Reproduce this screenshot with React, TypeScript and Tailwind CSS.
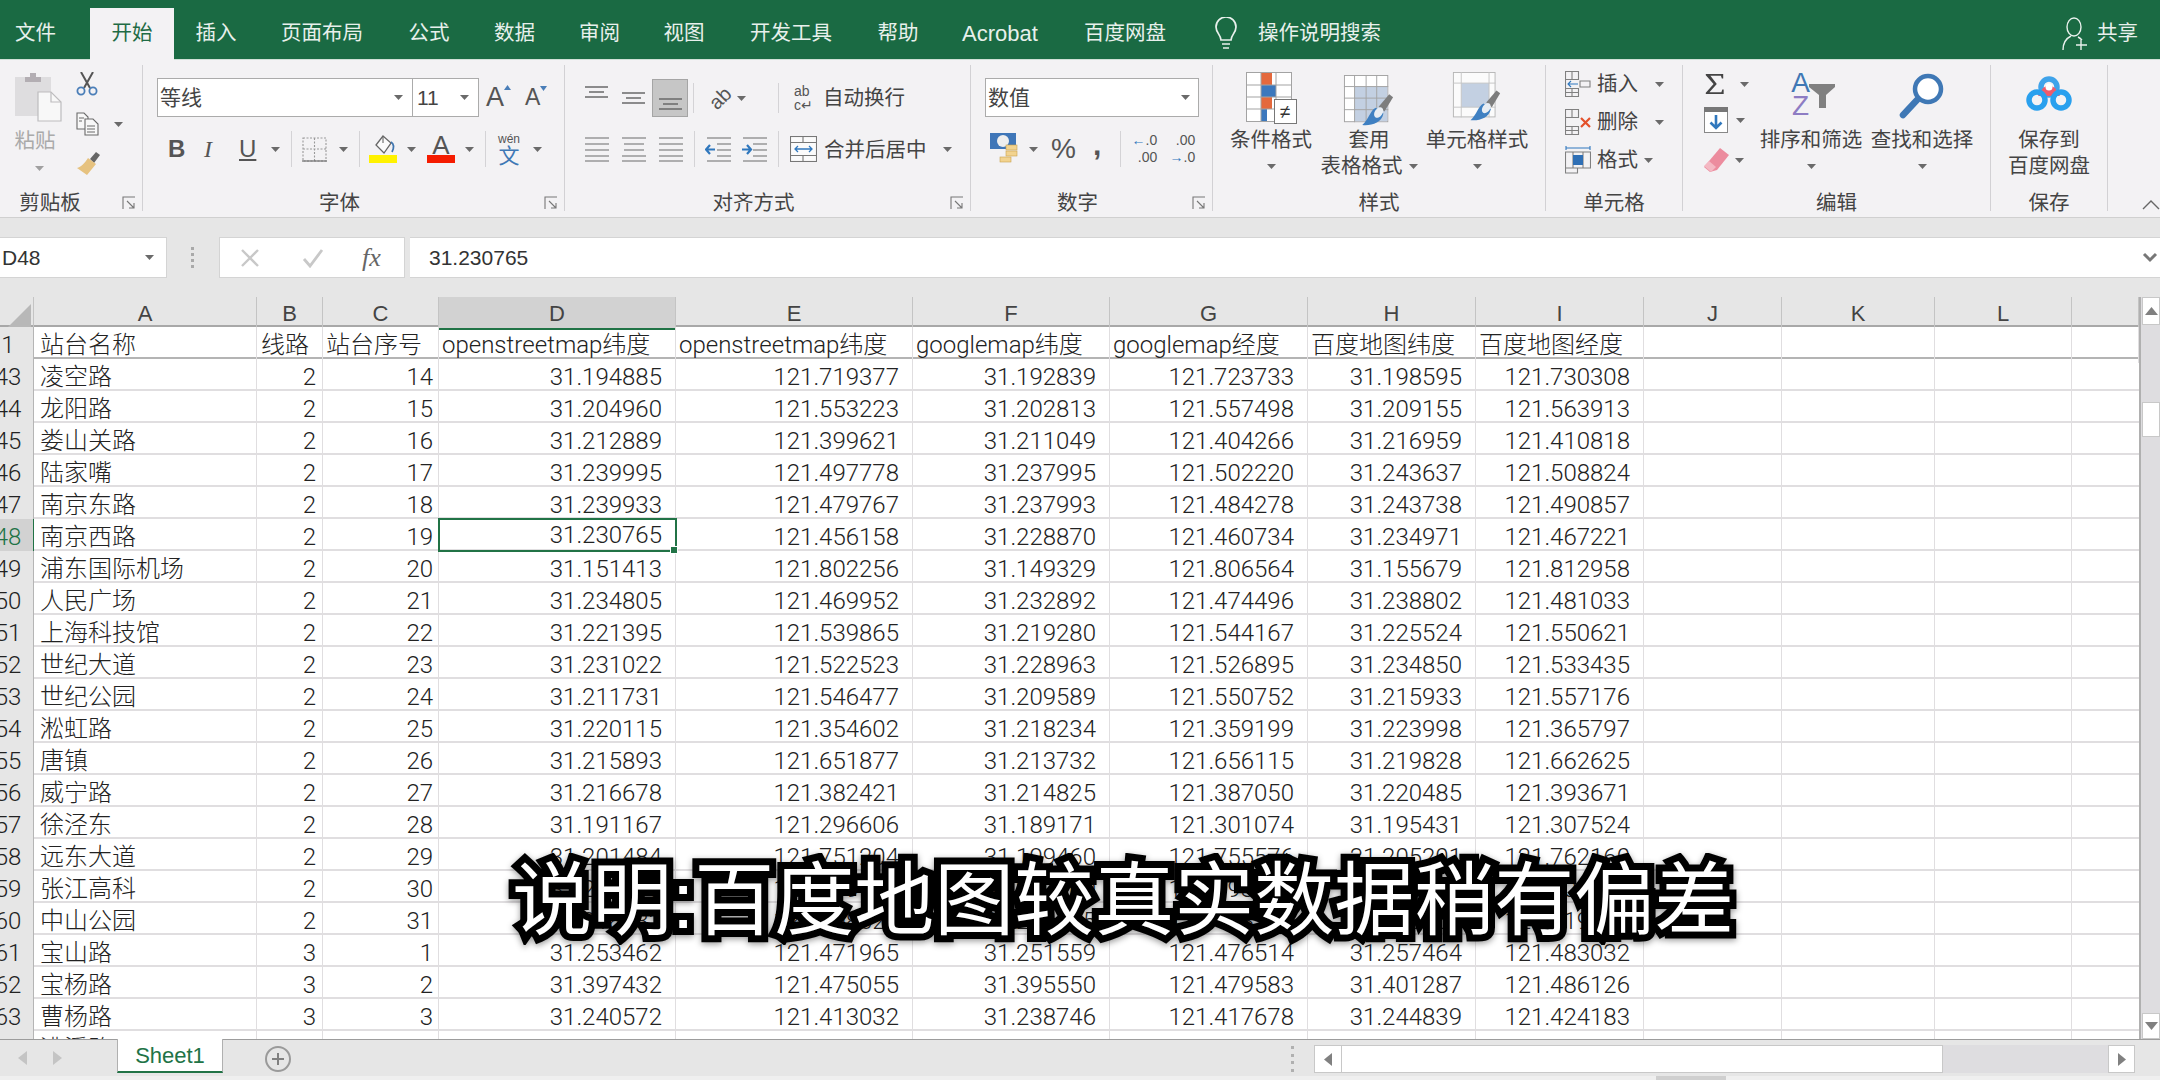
import React from 'react';

const tabs = [
  { t: '文件', c: 'w-[90px] pl-[15px] justify-start' },
  { t: '开始', c: 'w-[84px] justify-center bg-[#f3f2f4] !text-[#1f6b45]' },
  { t: '插入', c: 'w-[84px] justify-center' },
  { t: '页面布局', c: 'w-[128px] justify-center' },
  { t: '公式', c: 'w-[86px] justify-center' },
  { t: '数据', c: 'w-[85px] justify-center' },
  { t: '审阅', c: 'w-[85px] justify-center' },
  { t: '视图', c: 'w-[84px] justify-center' },
  { t: '开发工具', c: 'w-[130px] justify-center' },
  { t: '帮助', c: 'w-[84px] justify-center' },
  { t: 'Acrobat', c: 'w-[120px] justify-center text-[22px]' },
  { t: '百度网盘', c: 'w-[130px] justify-center' },
];

const rows: string[][] = [
  ['43', '凌空路', '2', '14', '31.194885', '121.719377', '31.192839', '121.723733', '31.198595', '121.730308'],
  ['44', '龙阳路', '2', '15', '31.204960', '121.553223', '31.202813', '121.557498', '31.209155', '121.563913'],
  ['45', '娄山关路', '2', '16', '31.212889', '121.399621', '31.211049', '121.404266', '31.216959', '121.410818'],
  ['46', '陆家嘴', '2', '17', '31.239995', '121.497778', '31.237995', '121.502220', '31.243637', '121.508824'],
  ['47', '南京东路', '2', '18', '31.239933', '121.479767', '31.237993', '121.484278', '31.243738', '121.490857'],
  ['48', '南京西路', '2', '19', '31.230765', '121.456158', '31.228870', '121.460734', '31.234971', '121.467221'],
  ['49', '浦东国际机场', '2', '20', '31.151413', '121.802256', '31.149329', '121.806564', '31.155679', '121.812958'],
  ['50', '人民广场', '2', '21', '31.234805', '121.469952', '31.232892', '121.474496', '31.238802', '121.481033'],
  ['51', '上海科技馆', '2', '22', '31.221395', '121.539865', '31.219280', '121.544167', '31.225524', '121.550621'],
  ['52', '世纪大道', '2', '23', '31.231022', '121.522523', '31.228963', '121.526895', '31.234850', '121.533435'],
  ['53', '世纪公园', '2', '24', '31.211731', '121.546477', '31.209589', '121.550752', '31.215933', '121.557176'],
  ['54', '淞虹路', '2', '25', '31.220115', '121.354602', '31.218234', '121.359199', '31.223998', '121.365797'],
  ['55', '唐镇', '2', '26', '31.215893', '121.651877', '31.213732', '121.656115', '31.219828', '121.662625'],
  ['56', '威宁路', '2', '27', '31.216678', '121.382421', '31.214825', '121.387050', '31.220485', '121.393671'],
  ['57', '徐泾东', '2', '28', '31.191167', '121.296606', '31.189171', '121.301074', '31.195431', '121.307524'],
  ['58', '远东大道', '2', '29', '31.201484', '121.751204', '31.199460', '121.755576', '31.205201', '121.762160'],
  ['59', '张江高科', '2', '30', '31.202793', '121.589470', '31.200760', '121.593815', '31.206602', '121.600373'],
  ['60', '中山公园', '2', '31', '31.218632', '121.408620', '31.216765', '121.413245', '31.222551', '121.419873'],
  ['61', '宝山路', '3', '1', '31.253462', '121.471965', '31.251559', '121.476514', '31.257464', '121.483032'],
  ['62', '宝杨路', '3', '2', '31.397432', '121.475055', '31.395550', '121.479583', '31.401287', '121.486126'],
  ['63', '曹杨路', '3', '3', '31.240572', '121.413032', '31.238746', '121.417678', '31.244839', '121.424183'],
  ['64', '漕溪路', '3', '4', '', '', '', '', '', ''],
];

const gridCols = 'grid grid-cols-[34px_223px_66px_116px_237px_237px_197px_198px_168px_168px_138px_153px_137px_67px]';
const cellText = "text-[#222] text-[24px] font-light [font-kerning:none] font-['Roboto','Noto_Sans_CJK_SC',sans-serif]";
const letters = ['A', 'B', 'C', 'D', 'E', 'F', 'G', 'H', 'I', 'J', 'K', 'L', ''];
const head = ['站台名称', '线路', '站台序号', 'openstreetmap纬度', 'openstreetmap纬度', 'googlemap纬度', 'googlemap经度', '百度地图纬度', '百度地图经度'];

const Caret = ({ className = '' }: { className?: string }) => (
  <svg width="9" height="5" viewBox="0 0 9 5" className={`shrink-0 ${className}`}><path d="M0 0h9L4.5 5z" fill="#6a6a6a" /></svg>
);

const Launcher = () => (
  <svg width="14" height="14" viewBox="0 0 14 14" fill="none" stroke="#777" strokeWidth="1.1">
    <path d="M1 13V1h12" /><path d="M5 5l7 7M7 12h5V7" />
  </svg>
);

const VBar = ({ className = '' }: { className?: string }) => <div className={`w-px h-[36px] bg-[#d4d3d6] shrink-0 ${className}`} />;

const Group = ({ className, label, launcher, pr, children }: { className: string; label: string; launcher?: boolean; pr?: string; children: React.ReactNode }) => (
  <div className={`h-[146px] border-r border-[#d2d1d4] flex flex-col shrink-0 ${className}`}>
    <div className="h-[130px] text-[#444] text-[20.5px]">{children}</div>
    <div className="h-[16px] flex items-center text-[#444] text-[20.5px]">
      <div className={`flex-1 text-center ${pr || ''}`}>{label}</div>
      {launcher && <div className="w-[28px] flex justify-center pl-[2px]"><Launcher /></div>}
    </div>
  </div>
);

const PasteIcon = () => (
  <svg width="48" height="50" viewBox="0 0 48 50">
    <rect x="0" y="5" width="36" height="39" fill="#dedddf" />
    <path d="M10 5h5V1h6v4h5v5H10z" fill="#b3aeb3" />
    <path d="M23 20h13l10 10v19H23z" fill="#f8f8f8" stroke="#bdbcbe" strokeWidth="1.2" />
    <path d="M36 20v10h10" fill="none" stroke="#bdbcbe" strokeWidth="1.2" />
  </svg>
);

const ScissorsIcon = () => (
  <svg width="22" height="24" viewBox="0 0 22 24" fill="none">
    <path d="M5 0l9 16M17 0L8 16" stroke="#555" strokeWidth="2" />
    <circle cx="5" cy="19" r="3.6" stroke="#4a7eb8" strokeWidth="1.8" />
    <circle cx="17" cy="19" r="3.6" stroke="#4a7eb8" strokeWidth="1.8" />
  </svg>
);

const CopyIcon = () => (
  <svg width="24" height="24" viewBox="0 0 24 24" fill="#f8f8f8" stroke="#6a6a6a" strokeWidth="1.1">
    <path d="M1 1h7l4 4v12H1z" />
    <path d="M9 7h8l5 5v11H9z" />
    <path d="M3 6h5M3 9h3M11 14h8M11 17h8M11 20h8" fill="none" />
  </svg>
);

const BrushIcon = () => (
  <svg width="25" height="23" viewBox="0 0 25 23">
    <path d="M14 7l6-7 4 3-6 8z" fill="#666" />
    <path d="M12 6l8 6-9 11-10-7c4-1 8-5 11-10z" fill="#e6c27f" />
  </svg>
);

const BorderIcon = () => (
  <svg width="25" height="25" viewBox="0 0 25 25" fill="none" stroke="#999" strokeWidth="1.1" strokeDasharray="2 1.5">
    <path d="M1 1h23v23H1zM12.5 1v23M1 12h23" />
    <path d="M0 24h25" stroke="#666" strokeDasharray="none" />
  </svg>
);

const FillIcon = () => (
  <svg width="29" height="28" viewBox="0 0 29 28">
    <path d="M14 1l8 7-7 10-8-8z" fill="#fbfbfb" stroke="#666" strokeWidth="1.3" />
    <path d="M14 1v7" stroke="#666" strokeWidth="1.1" />
    <path d="M22 7c3 2 3 6 1 10" fill="none" stroke="#3f76b0" strokeWidth="1.7" />
    <rect x="0" y="20" width="28" height="8" fill="#fff200" />
  </svg>
);

const AlignIcon = ({ variant }: { variant: 'l' | 'c' | 'r' }) => (
  <svg width="24" height="25" viewBox="0 0 24 25" stroke="#6a6a6a" strokeWidth="1.2">
    <path d="M0 1h24M0 19h24M0 24h24" />
    {variant === 'c' ? <path d="M2 7h20M2 13h20" /> : <path d="M0 7h24M0 13h24" />}
  </svg>
);

const VAlign = ({ className = '' }: { className?: string }) => (
  <svg width="23" height="12" viewBox="0 0 23 12" stroke="#6a6a6a" strokeWidth="1.3" className={className}>
    <path d="M0 1h23M4 6h15M0 11h23" />
  </svg>
);

const IndentIcon = ({ out }: { out?: boolean }) => (
  <svg width="26" height="25" viewBox="0 0 26 25" fill="none">
    <path d="M2 1h24M12 7h14M12 13h14M12 19h14M2 24h24" stroke="#6a6a6a" strokeWidth="1.2" />
    {out ? <path d="M10 12.500H1M5 8l-4 4.500L5 17" stroke="#2f77bd" strokeWidth="2.2" /> : <path d="M1 12.500h9M6 8l4 4.500L6 17" stroke="#2f77bd" strokeWidth="2.2" />}
  </svg>
);

const MergeIcon = () => (
  <svg width="27" height="26" viewBox="0 0 27 26" fill="#fbfbfb" stroke="#777" strokeWidth="1.1">
    <rect x="0.5" y="0.5" width="26" height="25" />
    <path d="M0 6.500h27M0 19.500h27M13 0v6.500M13 19.500V26" fill="none" />
    <path d="M5 13h17M8 10l-3 3 3 3M19 10l3 3-3 3" fill="none" stroke="#2f77bd" strokeWidth="1.3" />
  </svg>
);

const CurrencyIcon = () => (
  <svg width="28" height="33" viewBox="0 0 28 33">
    <rect x="0" y="0" width="26" height="16" fill="#3f76b8" />
    <ellipse cx="13" cy="8" rx="6" ry="6" fill="#eee" />
    <rect x="16" y="12" width="11" height="5" fill="#f2d38f" stroke="#c9a24f" strokeWidth=".6" />
    <rect x="16" y="18" width="11" height="5" fill="#f2d38f" stroke="#c9a24f" strokeWidth=".6" />
    <rect x="10" y="24" width="11" height="5" fill="#f2d38f" stroke="#c9a24f" strokeWidth=".6" />
  </svg>
);

const CondIcon = () => (
  <div className="relative w-[51px] h-[52px]">
    <svg width="46" height="50" viewBox="0 0 46 50" fill="none">
      <rect x="0.5" y="0.5" width="45" height="49" fill="#fff" stroke="#a3a3a3" />
      <rect x="15" y="1" width="11" height="12" fill="#e4693d" />
      <rect x="15" y="13" width="15" height="12" fill="#3c78bd" />
      <rect x="15" y="25" width="11" height="12" fill="#e4693d" />
      <rect x="15" y="37" width="6" height="12" fill="#3c78bd" />
      <path d="M0 13h46M0 25h46M0 37h46M15 0v50M30 0v50" stroke="#a3a3a3" strokeWidth="1" />
    </svg>
    <div className="absolute right-0 bottom-0 w-[23px] h-[25px] bg-white border border-[#777] flex items-center justify-center text-[19px] leading-none text-[#333]">≠</div>
  </div>
);

const TableIcon = () => (
  <svg width="52" height="52" viewBox="0 0 52 54" fill="none" className="mt-[3px]">
    <rect x="0.5" y="0.5" width="45" height="48" fill="#fff" stroke="#a3a3a3" />
    <path d="M11 12h34v36H11z" fill="#c3d0e2" />
    <path d="M0 12h46M0 24h46M0 36h46M11 0v49M23 0v49M34 0v49" stroke="#a3a3a3" />
    <path d="M36 33l11-13 4 3-9 15z" fill="#7d7d7d" />
    <path d="M33 34c-6 3-7 12-14 18 9 1 20-2 22-12z" fill="#3f80c2" />
    <ellipse cx="36" cy="39" rx="4" ry="6" fill="#e8edf3" transform="rotate(35 36 39)" />
  </svg>
);

const StyleIcon = () => (
  <svg width="52" height="50" viewBox="0 0 52 54" fill="none">
    <rect x="0.5" y="0.5" width="45" height="48" fill="#fbfbfb" stroke="#b5b5b5" />
    <rect x="9" y="12" width="30" height="26" fill="#c3d0e2" />
    <path d="M0 12h46M9 0v49M39 0v49M0 38h46" stroke="#c4c4c4" />
    <path d="M36 33l11-13 4 3-9 15z" fill="#7d7d7d" />
    <path d="M33 34c-6 3-7 12-14 18 9 1 20-2 22-12z" fill="#3f80c2" />
    <ellipse cx="36" cy="39" rx="4" ry="6" fill="#e8edf3" transform="rotate(35 36 39)" />
  </svg>
);

const CellsGrid = ({ children }: { children?: React.ReactNode }) => (
  <svg width="26" height="26" viewBox="0 0 26 26" fill="none" stroke="#808080" strokeWidth="1.1" className="shrink-0">
    <path d="M.5.5h13v8H.5zM7 .5v8M.5 17.5h13v8H.5zM7 17.5v8M.5 8.5v9M13.5 21.5H.5" />
    {children}
  </svg>
);

const SigmaIcon = () => (
  <svg width="21" height="22" viewBox="0 0 21 24"><path d="M1 1h19v5h-1.500l-1-3H6l7 9-8 9h13l1-3H20.500v5H1v-1.500L9.500 12 1 2.500z" fill="#444" /></svg>
);

const FillDownIcon = () => (
  <svg width="24" height="26" viewBox="0 0 24 26">
    <rect x="0.5" y="0.5" width="23" height="25" fill="#fff" stroke="#888" />
    <rect x="0" y="0" width="24" height="5" fill="#777" />
    <path d="M12 8v13M6.500 15.500l5.500 5.500 5.500-5.500" fill="none" stroke="#2f77bd" strokeWidth="2.6" />
  </svg>
);

const EraserIcon = () => (
  <svg width="25" height="24" viewBox="0 0 25 24"><path d="M16 0l9 7-12 15-7 2-6-5z" fill="#ec8c9e" /><path d="M0 18l7 6 5-5-7-6z" fill="#f4b8c3" /></svg>
);

const FunnelIcon = () => (
  <svg width="26" height="25" viewBox="0 0 26 25"><path d="M0 1h26v3l-9 8v13h-7V12L0 4z" fill="#808080" /></svg>
);

const FindIcon = () => (
  <svg width="46" height="46" viewBox="0 0 46 46" fill="none">
    <circle cx="29" cy="16" r="13" stroke="#3f78b5" strokeWidth="4.500" fill="#fff" />
    <path d="M18 27L4 42" stroke="#3f78b5" strokeWidth="6.500" strokeLinecap="round" />
  </svg>
);

const BaiduIcon = () => (
  <svg width="46" height="36" viewBox="0 0 46 36" fill="none">
    <circle cx="23" cy="11" r="8" stroke="#3fa3ea" strokeWidth="5.500" />
    <path d="M17 12a10 10 0 0 1 12 0l5 8H12z" fill="#ef5b6b" />
    <circle cx="11" cy="24" r="8" stroke="#29a0ee" strokeWidth="5.500" />
    <circle cx="35" cy="24" r="8" stroke="#29a0ee" strokeWidth="5.500" />
    <circle cx="23" cy="11" r="3.500" fill="#fff" />
  </svg>
);

const BulbIcon = () => (
  <svg width="22" height="34" viewBox="0 0 22 34" fill="none" stroke="#e8f0ec" strokeWidth="1.7">
    <path d="M6 23c0-5-5-7-5-13a10 10 0 0 1 20 0c0 6-5 8-5 13z" />
    <path d="M7 27h8M8 31h6" />
  </svg>
);

const UserIcon = () => (
  <svg width="26" height="34" viewBox="0 0 26 34" fill="none" stroke="#e8f0ec" strokeWidth="1.4">
    <ellipse cx="12" cy="10" rx="7" ry="9" />
    <path d="M1 33c0-8 4-12 8-14M16 20c2 1 3 2 4 3M19 23v10M14 28h11" />
  </svg>
);

const LargeBtn = ({ className, icon, lines, caretInline }: { className: string; icon: React.ReactNode; lines: string[]; caretInline?: boolean }) => (
  <div className={`flex flex-col items-center shrink-0 ${className}`}>
    <div className="h-[62px] pt-[7px]">{icon}</div>
    {lines.map((l, i) => (
      <div key={i} className="h-[26px] leading-[26px] whitespace-nowrap flex items-center">
        {l}
        {caretInline && i === lines.length - 1 && <Caret className="ml-[6px]" />}
      </div>
    ))}
    {!caretInline && lines.length === 1 && <div className="h-[26px] flex items-center"><Caret /></div>}
  </div>
);

const Ribbon = () => (
  <div className="h-[158px] bg-[#f3f2f4] pt-[5px] flex relative border-b border-[#d0d0d0]">
    <Group className="w-[143px]" label="剪贴板" launcher pr="pr-[14px]">
      <div className="flex">
        <div className="w-[76px] flex flex-col items-center pl-[2px] pt-[7px] text-[#aaa]">
          <PasteIcon />
          <div className="mt-[6px] leading-[26px] -ml-[8px]">粘贴</div>
          <Caret className="mt-[12px] opacity-60" />
        </div>
        <div className="flex flex-col pt-[7px]">
          <ScissorsIcon />
          <div className="flex items-center mt-[16px]"><CopyIcon /><Caret className="ml-[14px]" /></div>
          <div className="mt-[16px]"><BrushIcon /></div>
        </div>
      </div>
    </Group>

    <Group className="w-[422px]" label="字体" launcher>
      <div className="flex items-center pl-[14px] pt-[13px]">
        <div className="w-[256px] h-[39px] bg-white border border-[#ababab] flex items-center justify-between pl-[2px] pr-[9px] text-[21px]">等线<Caret /></div>
        <div className="w-[66px] h-[39px] bg-white border border-l-0 border-[#ababab] flex items-center justify-between pl-[4px] pr-[9px] text-[21px]">11<Caret /></div>
        <div className="ml-[7px] flex items-start text-[27px] leading-none text-[#555]">A<svg width="7" height="5" viewBox="0 0 7 5" className="mt-[1px]"><path d="M0 5h7L3.500 0z" fill="#4a7eb8" /></svg></div>
        <div className="ml-[14px] flex items-start text-[23px] leading-none text-[#555]">A<svg width="7" height="5" viewBox="0 0 7 5"><path d="M0 0h7L3.500 5z" fill="#4a7eb8" /></svg></div>
      </div>
      <div className="flex items-center pl-[25px] mt-[13px] h-[38px]">
        <span className="font-bold text-[24px] text-[#555] w-[14px]">B</span>
        <span className="italic text-[24px] text-[#555] w-[14px] ml-[22px] font-['Liberation_Serif',serif]">I</span>
        <span className="underline text-[24px] text-[#555] w-[16px] ml-[21px]">U</span>
        <Caret className="ml-[16px]" />
        <VBar className="ml-[11px]" />
        <div className="ml-[10px]"><BorderIcon /></div>
        <Caret className="ml-[12px]" />
        <VBar className="ml-[11px]" />
        <div className="ml-[9px]"><FillIcon /></div>
        <Caret className="ml-[9px]" />
        <VBar className="opacity-0" />
        <div className="ml-[10px] w-[28px] flex flex-col items-center">
          <span className="text-[26px] leading-[20px] text-[#555]">A</span>
          <div className="w-[28px] h-[8px] bg-[#f51c00]" />
        </div>
        <Caret className="ml-[10px]" />
        <VBar className="ml-[11px]" />
        <div className="ml-[11px] w-[24px] flex flex-col items-center leading-none">
          <span className="text-[12px] text-[#555]">wén</span>
          <span className="text-[21px] text-[#3f78b5]">文</span>
        </div>
        <Caret className="ml-[12px]" />
      </div>
    </Group>

    <Group className="w-[406px]" label="对齐方式" launcher>
      <div className="flex items-center pl-[20px] pt-[14px] h-[52px]">
        <VAlign className="-mt-[12px]" />
        <VAlign className="ml-[14px]" />
        <div className="ml-[7px] w-[36px] h-[38px] bg-[#c6c6c6] border border-[#a5a5a5] flex items-end justify-center pb-[6px]"><VAlign /></div>
        <VBar className="ml-[5px] !h-[30px]" />
        <span className="ml-[11px] w-[30px] text-[20px] leading-none -rotate-45 text-[#555] text-center">ab</span>
        <Caret className="ml-[2px]" />
        <VBar className="ml-[32px] !h-[30px]" />
        <div className="ml-[15px] w-[22px] flex flex-col text-[14px] leading-[14px] text-[#555]"><span>ab</span><span>c↵</span></div>
        <span className="ml-[7px] whitespace-nowrap">自动换行</span>
      </div>
      <div className="flex items-center pl-[20px] mt-[13px] h-[38px]">
        <AlignIcon variant="l" />
        <div className="ml-[13px]"><AlignIcon variant="c" /></div>
        <div className="ml-[13px]"><AlignIcon variant="r" /></div>
        <VBar className="ml-[11px]" />
        <div className="ml-[10px]"><IndentIcon out /></div>
        <div className="ml-[10px]"><IndentIcon /></div>
        <VBar className="ml-[11px]" />
        <div className="ml-[11px]"><MergeIcon /></div>
        <span className="ml-[7px] mt-[3px] whitespace-nowrap">合并后居中</span>
        <Caret className="ml-[16px]" />
      </div>
    </Group>

    <Group className="w-[242px]" label="数字" launcher>
      <div className="pl-[14px] pt-[13px]">
        <div className="w-[214px] h-[39px] bg-white border border-[#ababab] flex items-center justify-between pl-[2px] pr-[8px] text-[21px]">数值<Caret /></div>
      </div>
      <div className="flex items-center pl-[19px] mt-[13px] h-[38px]">
        <CurrencyIcon />
        <Caret className="ml-[11px]" />
        <span className="ml-[13px] text-[28px] text-[#555] leading-none">%</span>
        <span className="ml-[17px] text-[30px] font-bold text-[#555] leading-none -mt-[8px]">,</span>
        <VBar className="ml-[19px]" />
        <div className="ml-[10px] grid grid-cols-[26px_26px] gap-x-[12px] text-[14px] leading-[17px] text-[#555] text-right">
          <span><b className="text-[#2f77bd]">←</b>.0</span><span>.00</span>
          <span>.00</span><span><b className="text-[#2f77bd]">→</b>.0</span>
        </div>
      </div>
    </Group>

    <Group className="w-[333px]" label="样式">
      <div className="flex">
        <LargeBtn className="w-[116px]" icon={<CondIcon />} lines={['条件格式']} />
        <LargeBtn className="w-[80px]" icon={<TableIcon />} lines={['套用', '表格格式']} caretInline />
        <LargeBtn className="w-[136px]" icon={<StyleIcon />} lines={['单元格样式']} />
      </div>
    </Group>

    <Group className="w-[137px]" label="单元格">
      <div className="flex flex-col pl-[19px] pt-[6px] gap-[12px]">
        <div className="flex items-center h-[26px]">
          <CellsGrid><path d="M13 13H3M6 10l-3 3 3 3" stroke="#2f77bd" /><path d="M15 10h10v6H15z" /></CellsGrid>
          <span className="ml-[6px]">插入</span><Caret className="ml-[17px]" />
        </div>
        <div className="flex items-center h-[26px]">
          <CellsGrid><path d="M16 9l9 9M25 9l-9 9" stroke="#e4512b" strokeWidth="2.200" /></CellsGrid>
          <span className="ml-[6px]">删除</span><Caret className="ml-[17px]" />
        </div>
        <div className="flex items-center h-[26px]">
          <svg width="26" height="28" viewBox="0 0 26 28" fill="none" stroke="#808080" strokeWidth="1.1" className="shrink-0">
            <path d="M1 2h24M1 0v4M25 0v4" stroke="#2f77bd" />
            <path d="M.5 6h25v16H.5zM8 6v16M18 6v16M.5 22v5h12v-5" />
            <rect x="8" y="9" width="10" height="10" fill="#2f6fb5" stroke="none" />
          </svg>
          <span className="ml-[6px]">格式</span><Caret className="ml-[6px]" />
        </div>
      </div>
    </Group>

    <Group className="w-[308px]" label="编辑">
      <div className="flex">
        <div className="w-[73px] flex flex-col pl-[21px] pt-[8px] shrink-0">
          <div className="flex items-center"><SigmaIcon /><Caret className="ml-[15px]" /></div>
          <div className="flex items-center mt-[12px]"><FillDownIcon /><Caret className="ml-[8px]" /></div>
          <div className="flex items-center mt-[15px]"><EraserIcon /><Caret className="ml-[6px]" /></div>
        </div>
        <div className="w-[110px] flex flex-col items-center shrink-0">
          <div className="h-[62px] pt-[5px] flex items-start pl-[4px]">
            <div className="flex flex-col items-center text-[28px] leading-[25px]">
              <span className="text-[#3f78b5]">A</span><span className="text-[#8d7cc3] -mt-[2px]">Z</span>
            </div>
            <div className="mt-[13px] -ml-[1px]"><FunnelIcon /></div>
          </div>
          <div className="h-[26px] leading-[26px] whitespace-nowrap">排序和筛选</div>
          <div className="h-[26px] flex items-center"><Caret /></div>
        </div>
        <div className="w-[112px] flex flex-col items-center shrink-0">
          <div className="h-[62px] pt-[8px]"><FindIcon /></div>
          <div className="h-[26px] leading-[26px] whitespace-nowrap">查找和选择</div>
          <div className="h-[26px] flex items-center"><Caret /></div>
        </div>
      </div>
    </Group>

    <Group className="w-[117px]" label="保存">
      <div className="flex flex-col items-center">
        <div className="h-[62px] pt-[11px]"><BaiduIcon /></div>
        <div className="h-[26px] leading-[26px]">保存到</div>
        <div className="h-[26px] leading-[26px]">百度网盘</div>
      </div>
    </Group>

    <svg width="18" height="10" viewBox="0 0 18 10" fill="none" stroke="#666" strokeWidth="1.4" className="absolute right-0 bottom-[7px]">
      <path d="M1 9l8-8 8 8" />
    </svg>
  </div>
);

const FormulaBar = () => (
  <div className="h-[79px] bg-[#e6e6e6] pt-[19px] flex items-start">
    <div className="w-[167px] h-[41px] bg-white border border-[#d4d4d4] border-l-0 flex items-center justify-between pl-[2px] pr-[12px] text-[21px] text-[#333]">D48<Caret /></div>
    <div className="w-[52px] h-[41px] flex flex-col items-center justify-center gap-[3px] pr-[2px]">
      <span className="w-[3px] h-[3px] bg-[#a9a9a9]" /><span className="w-[3px] h-[3px] bg-[#a9a9a9]" /><span className="w-[3px] h-[3px] bg-[#a9a9a9]" /><span className="w-[3px] h-[3px] bg-[#a9a9a9]" />
    </div>
    <div className="w-[186px] h-[41px] bg-white border border-[#d4d4d4] flex items-center pl-[20px]">
      <svg width="20" height="20" viewBox="0 0 20 20" stroke="#c8c8c8" strokeWidth="2.400"><path d="M2 2l16 16M18 2L2 18" /></svg>
      <svg width="22" height="20" viewBox="0 0 22 20" fill="none" stroke="#c8c8c8" strokeWidth="2.800" className="ml-[42px]"><path d="M2 11l6 7L20 2" /></svg>
      <span className="ml-[38px] italic text-[26px] text-[#666] font-['Liberation_Serif',serif]">fx</span>
    </div>
    <div className="flex-1 ml-[5px] h-[41px] bg-white border-y border-[#d4d4d4] flex items-center justify-between pl-[19px] pr-[2px] text-[21px] text-[#333]">
      31.230765
      <svg width="16" height="11" viewBox="0 0 16 11" fill="none" stroke="#777" strokeWidth="3"><path d="M2 2l6 6 6-6" /></svg>
    </div>
  </div>
);

const Sheet = () => (
  <div className="flex h-[742px] bg-white overflow-hidden">
    <div className="w-[2139px] shrink-0 overflow-hidden border-r-2 border-[#b0b0b0] box-content">
      <div className={`${gridCols} h-[28px] bg-[#e6e6e6] border-b-2 border-[#a8a8a8] box-content`}>
        <div className="flex items-end justify-end pr-[2px] pb-[2px] border-r border-[#c4c4c4]">
          <svg width="24" height="24" viewBox="0 0 24 24"><path d="M24 0v24H0z" fill="#b8b8b8" /></svg>
        </div>
        {letters.map((l, i) => (
          <div key={i} className={`flex items-center justify-center text-[22px] text-[#444] border-r border-[#c4c4c4] ${l === 'D' ? 'bg-[#d2d2d2] shadow-[inset_0_-2px_0_#217346]' : ''}`}>{l}</div>
        ))}
      </div>
      <div className={`${gridCols} h-[32px] border-b-2 border-[#b4b4b4] ${cellText}`}>
        <div className="bg-[#e6e6e6] border-r border-[#b5b5b5] flex items-center justify-center pr-[17px] overflow-hidden">1</div>
        {letters.map((_, i) => (
          <div key={i} className={`flex items-center whitespace-nowrap border-r border-[#e0dee0] ${i === 0 ? 'pl-[6px]' : i === 1 ? 'pl-[4px]' : 'pl-[3px]'}`}>{head[i]}</div>
        ))}
      </div>
      {rows.map((r) => {
        const cur = r[0] === '48';
        return (
          <div key={r[0]} className={`${gridCols} h-[32px] border-b-2 border-[#e0dee0] ${cellText}`}>
            <div className={`flex items-center justify-center pr-[17px] overflow-hidden border-r ${cur ? 'bg-[#d2d2d2] text-[#217346] border-[#217346]' : 'bg-[#e6e6e6] border-[#b5b5b5]'}`}>{r[0]}</div>
            <div className="flex items-center pl-[6px] border-r border-[#e0dee0]">{r[1]}</div>
            <div className="flex items-center justify-end pr-[6px] border-r border-[#e0dee0]">{r[2]}</div>
            <div className="flex items-center justify-end pr-[5px] border-r border-[#e0dee0]">{r[3]}</div>
            {r.slice(4).map((v, i) => (
              <div key={i} className={`flex items-center justify-end pr-[13px] border-r border-[#e0dee0] ${cur && i === 0 ? 'relative h-[32px] outline-2 -outline-offset-1 outline-[#217346]' : ''}`}>
                {v}
                {cur && i === 0 && <span className="absolute -right-[3px] -bottom-[3px] w-[6px] h-[6px] bg-[#217346] border border-white box-content" />}
              </div>
            ))}
            <div className="border-r border-[#e0dee0]" />
            <div className="border-r border-[#e0dee0]" />
            <div className="border-r border-[#e0dee0]" />
            <div />
          </div>
        );
      })}
    </div>
    <div className="flex-1 bg-[#dedde0] flex flex-col pl-[1px] h-[742px]">
      <div className="h-[28px] bg-white border border-[#c8c8c8] flex items-center justify-center">
        <svg width="13" height="8" viewBox="0 0 13 8"><path d="M0 8h13L6.500 0z" fill="#808080" /></svg>
      </div>
      <div className="mt-[77px] h-[35px] bg-white border border-[#c8c8c8]" />
      <div className="mt-auto h-[26px] bg-white border border-[#c8c8c8] flex items-center justify-center">
        <svg width="13" height="8" viewBox="0 0 13 8"><path d="M0 0h13L6.500 8z" fill="#808080" /></svg>
      </div>
    </div>
  </div>
);

const BottomBar = () => (
  <div className="h-[41px] bg-[#e6e6e6] border-t border-[#9c9c9c] flex flex-col">
    <div className="h-[36px] flex">
      <div className="w-[117px] flex items-center pl-[18px] gap-[26px]">
        <svg width="9" height="14" viewBox="0 0 9 14"><path d="M9 0v14L0 7z" fill="#c4c4c4" /></svg>
        <svg width="9" height="14" viewBox="0 0 9 14"><path d="M0 0v14l9-7z" fill="#c4c4c4" /></svg>
      </div>
      <div className="w-[106px] h-[34px] -mt-px bg-white border-x border-[#b0b0b0] border-b-2 border-b-[#217346] flex items-center justify-center text-[#217346] text-[22px]">Sheet1</div>
      <div className="ml-[42px] mt-[6px] w-[26px] h-[26px] rounded-full border-2 border-[#9a9a9a] flex items-center justify-center">
        <svg width="14" height="14" viewBox="0 0 14 14" stroke="#808080" strokeWidth="2"><path d="M7 1v12M1 7h12" /></svg>
      </div>
      <div className="ml-[999px] mt-[6px] h-[26px] w-[4px] flex flex-col justify-between items-center">
        <span className="w-[3px] h-[3px] bg-[#b0b0b0]" /><span className="w-[3px] h-[3px] bg-[#b0b0b0]" /><span className="w-[3px] h-[3px] bg-[#b0b0b0]" /><span className="w-[3px] h-[3px] bg-[#b0b0b0]" />
      </div>
      <div className="ml-[20px] mt-[5px] h-[28px] w-[821px] bg-[#dedde0] flex">
        <div className="w-[28px] bg-white border border-[#c8c8c8] flex items-center justify-center">
          <svg width="8" height="13" viewBox="0 0 8 13"><path d="M8 0v13L0 6.500z" fill="#808080" /></svg>
        </div>
        <div className="w-[601px] bg-white border-y border-r border-[#c8c8c8]" />
        <div className="ml-auto w-[27px] bg-white border border-[#c8c8c8] flex items-center justify-center">
          <svg width="8" height="13" viewBox="0 0 8 13"><path d="M0 0v13l8-6.500z" fill="#808080" /></svg>
        </div>
      </div>
    </div>
    <div className="flex-1 bg-[#efefef] pl-[1656px]">
      <div className="w-[70px] h-full bg-[#cfcfcf]" />
    </div>
  </div>
);

export default function App() {
  return (
    <div className="relative w-[2160px] h-[1080px] overflow-hidden bg-white font-['Liberation_Sans','Noto_Sans_CJK_SC',sans-serif]">
      <div className="h-[60px] bg-[#1a6a43] pt-[8px] flex text-[20.5px] text-[#e8f0ec] border-b border-[#cfe0d6]">
        {tabs.map((t) => (
          <div key={t.t} className={`h-[52px] flex items-center pb-[2px] ${t.c}`}>{t.t}</div>
        ))}
        <div className="ml-[25px] h-[52px] flex items-center"><BulbIcon /></div>
        <div className="ml-[21px] h-[52px] flex items-center pb-[2px]">操作说明搜索</div>
        <div className="ml-auto h-[52px] flex items-center pr-[22px]">
          <UserIcon /><span className="ml-[9px] pb-[2px]">共享</span>
        </div>
      </div>
      <Ribbon />
      <FormulaBar />
      <Sheet />
      <BottomBar />
      <div className="absolute left-[512px] top-[855px] z-20 whitespace-nowrap text-[80px] leading-[92px] text-white [-webkit-text-stroke:14px_#000] [paint-order:stroke_fill] drop-shadow-[0_2px_3px_rgba(0,0,0,0.4)]">
        说明:百度地图较真实数据稍有偏差
      </div>
    </div>
  );
}
